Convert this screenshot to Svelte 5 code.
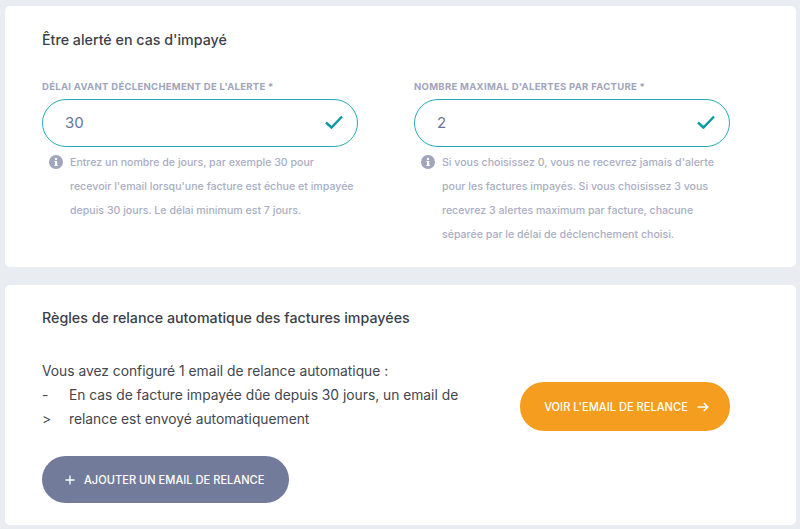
<script>
	const fields = [
		{
			label: "Délai avant déclenchement de l'alerte *",
			value: '30',
			help: [
				'Entrez un nombre de jours, par exemple 30 pour',
				"recevoir l'email lorsqu'une facture est échue et impayée",
				'depuis 30 jours. Le délai minimum est 7 jours.'
			]
		},
		{
			label: "Nombre maximal d'alertes par facture *",
			value: '2',
			help: [
				"Si vous choisissez 0, vous ne recevrez jamais d'alerte",
				'pour les factures impayés. Si vous choisissez 3 vous',
				'recevrez 3 alertes maximum par facture, chacune',
				'séparée par le délai de déclenchement choisi.'
			]
		}
	];
</script>

<main>
	<section class="card first">
		<h2>Être alerté en cas d'impayé</h2>
		<div class="fields">
			{#each fields as field}
				<div class="field">
					<label for={field.value}>{field.label}</label>
					<div class="input-wrap">
						<input id={field.value} type="text" value={field.value} />
						<svg class="check" width="20" height="16" viewBox="0 0 20 16" fill="none">
							<path d="M2 8.5 L7.5 13.5 L18 2.5" stroke="#0a9aa5" stroke-width="2.4" />
						</svg>
					</div>
					<div class="help">
						<svg class="info" width="14" height="14" viewBox="0 0 14 14">
							<circle cx="7" cy="7" r="7" fill="#a0a5bc" />
							<rect x="6" y="6" width="2.2" height="4.8" fill="#fff" />
							<rect x="5.3" y="6" width="2" height="1" fill="#fff" />
							<rect x="5.3" y="9.9" width="3.6" height="1" fill="#fff" />
							<circle cx="7" cy="4" r="1.2" fill="#fff" />
						</svg>
						<p>
							{#each field.help as line}
								<span>{line}</span>
							{/each}
						</p>
					</div>
				</div>
			{/each}
		</div>
	</section>

	<section class="card second">
		<h2>Règles de relance automatique des factures impayées</h2>
		<div class="rules">
			<div class="rule-text">
				<p>Vous avez configuré 1 email de relance automatique :</p>
				<div class="item">
					<span class="mark">-</span>
					<span>En cas de facture impayée dûe depuis 30 jours, un email de</span>
				</div>
				<div class="item">
					<span class="mark">&gt;</span>
					<span>relance est envoyé automatiquement</span>
				</div>
			</div>
			<button class="btn orange">
				Voir l'email de relance
				<svg width="12" height="10" viewBox="0 0 12 10" fill="none">
					<path d="M0.5 5 H10.5 M6.8 1 L10.8 5 L6.8 9" stroke="#fff" stroke-width="1.5" />
				</svg>
			</button>
		</div>
		<button class="btn grey">
			<svg width="10" height="10" viewBox="0 0 10 10" fill="none">
				<path d="M5 0.5 V9.5 M0.5 5 H9.5" stroke="#fff" stroke-width="1.3" />
			</svg>
			Ajouter un email de relance
		</button>
	</section>
</main>

<style>
	:global(body) {
		margin: 0;
		background: #e9edf1;
	}

	main {
		height: 529px;
		box-sizing: border-box;
		padding: 6px 4px 0 5px;
		font-family: Inter, 'Liberation Sans', sans-serif;
		overflow: hidden;
	}

	.card {
		background: #fff;
		border-radius: 5px;
		padding: 0 37px;
		box-sizing: border-box;
	}

	.first {
		height: 261px;
		margin-bottom: 18px;
		padding-top: 25px;
	}

	.second {
		height: 240px;
		padding-top: 24px;
	}

	h2 {
		margin: 0;
		font-size: 14.25px;
		font-weight: 500;
		line-height: 18px;
		color: #3c3f49;
	}

	.fields {
		display: flex;
		gap: 56px;
		margin-top: 31px;
	}

	.field {
		width: 316px;
	}

	label {
		display: block;
		font-size: 9.5px;
		font-weight: 700;
		letter-spacing: 0.3px;
		line-height: 14px;
		text-transform: uppercase;
		color: #a0a5bc;
		margin-bottom: 5px;
	}

	.input-wrap {
		position: relative;
	}

	input {
		display: block;
		width: 100%;
		height: 48px;
		box-sizing: border-box;
		border: 1px solid #2aa9b5;
		border-radius: 24px;
		padding: 0 22px 1px 22px;
		outline: none;
		font: 400 15px Inter, 'Liberation Sans', sans-serif;
		color: #6d7493;
	}

	.check {
		position: absolute;
		top: 15px;
		right: 14px;
	}

	.help {
		display: flex;
		gap: 7px;
		padding-left: 7px;
		margin-top: 4px;
	}

	.info {
		flex: none;
		margin-top: 4px;
	}

	.help p {
		margin: 0;
		font-size: 10.6px;
		font-weight: 500;
		line-height: 24px;
		color: #a9aec3;
	}

	.help span {
		display: block;
		white-space: nowrap;
	}

	.rules {
		display: flex;
		justify-content: space-between;
		align-items: flex-end;
		margin-top: 32px;
	}

	.rule-text {
		font-size: 13.8px;
		line-height: 24px;
		color: #43464f;
	}

	.rule-text p {
		margin: 0;
	}

	.item {
		display: flex;
		white-space: nowrap;
	}

	.mark {
		width: 27px;
	}

	.btn {
		display: flex;
		align-items: center;
		height: 47px;
		border: none;
		border-radius: 24px;
		color: #fff;
		font: 500 11.1px Inter, 'Liberation Sans', sans-serif;
		text-transform: uppercase;
		box-sizing: border-box;
	}

	.orange {
		width: 210px;
		height: 49px;
		justify-content: center;
		gap: 9px;
		padding: 0 0 0 3px;
		background: #f49d1e;
		margin-right: 29px;
	}

	.grey {
		width: 247px;
		gap: 9px;
		padding-left: 23px;
		background: #737b9a;
		margin-top: 25px;
	}
</style>
